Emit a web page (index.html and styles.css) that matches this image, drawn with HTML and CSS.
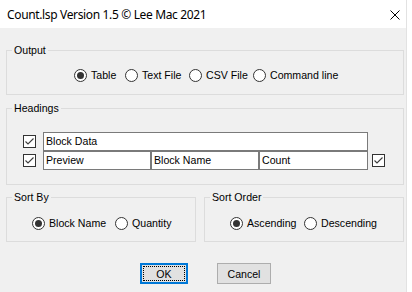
FILE: index.html
```html
<!DOCTYPE html>
<html lang="en">
<head>
    <meta charset="UTF-8">
    <meta name="viewport" content="width=device-width, initial-scale=1.0">
    <title>Count.lsp</title>
    <link rel="stylesheet" href="styles.css">
</head>
<body>
    <div class="window">
        <!-- Title bar -->
        <div class="titlebar">
            <span class="title">Count.lsp Version 1.5 © Lee Mac 2021</span>
            <svg class="close" width="10" height="10" viewBox="0 0 10 10">
                <path d="M0.5 0.5 L9.5 9.5 M9.5 0.5 L0.5 9.5" stroke="#000" stroke-width="1" fill="none"/>
            </svg>
        </div>

        <div class="client">
            <!-- Output -->
            <fieldset class="group group-output">
                <legend>Output</legend>
                <div class="radios radios-output">
                    <label class="opt opt-table"><span class="radio checked"></span>Table</label>
                    <label class="opt opt-text"><span class="radio"></span>Text File</label>
                    <label class="opt opt-csv"><span class="radio"></span>CSV File</label>
                    <label class="opt"><span class="radio"></span>Command line</label>
                </div>
            </fieldset>

            <!-- Headings -->
            <fieldset class="group group-headings">
                <legend>Headings</legend>
                <div class="heading-row">
                    <span class="check checked"><svg width="11" height="11" viewBox="0 0 11 11"><polyline points="1.5,5.5 4,8 9.5,2.5" fill="none" stroke="#3c3c3c" stroke-width="1.1"/></svg></span>
                    <div class="textbox textbox-wide">Block Data</div>
                </div>
                <div class="heading-row">
                    <span class="check checked"><svg width="11" height="11" viewBox="0 0 11 11"><polyline points="1.5,5.5 4,8 9.5,2.5" fill="none" stroke="#3c3c3c" stroke-width="1.1"/></svg></span>
                    <div class="textbox textbox-col">Preview</div>
                    <div class="textbox textbox-col">Block Name</div>
                    <div class="textbox textbox-last">Count</div>
                    <span class="check check-right checked"><svg width="11" height="11" viewBox="0 0 11 11"><polyline points="1.5,5.5 4,8 9.5,2.5" fill="none" stroke="#3c3c3c" stroke-width="1.1"/></svg></span>
                </div>
            </fieldset>

            <!-- Sort -->
            <div class="sort-row">
                <fieldset class="group group-sortby">
                    <legend>Sort By</legend>
                    <div class="radios">
                        <label class="opt opt-name"><span class="radio checked"></span>Block Name</label>
                        <label class="opt"><span class="radio"></span>Quantity</label>
                    </div>
                </fieldset>
                <fieldset class="group group-order">
                    <legend>Sort Order</legend>
                    <div class="radios">
                        <label class="opt opt-asc"><span class="radio checked"></span>Ascending</label>
                        <label class="opt"><span class="radio"></span>Descending</label>
                    </div>
                </fieldset>
            </div>

            <!-- Buttons -->
            <div class="buttons">
                <button class="btn btn-ok"><span class="focus">OK</span></button>
                <button class="btn btn-cancel">Cancel</button>
            </div>
        </div>
    </div>
</body>
</html>
```

FILE: styles.css
```css
body {
    margin: 0;
    background-color: #fff;
    font-family: "Liberation Sans", Arial, sans-serif;
    font-size: 10.6px;
    color: #000;
}
.window {
    width: 406px;
    height: 292px;
    border-right: 1px solid #e2e2e2;
    display: flex;
    flex-direction: column;
}
.titlebar {
    height: 28px;
    background-color: #fff;
    display: flex;
    align-items: center;
    justify-content: space-between;
}
.title {
    font-family: "Noto Sans", sans-serif;
    font-size: 12px;
    letter-spacing: -0.35px;
    padding-left: 7px;
    padding-top: 1px;
}
.close {
    margin-right: 6px;
    margin-top: 1px;
}
.client {
    flex: 1;
    background-color: #f0f0f0;
    padding: 16px 2px 0 6px;
}
.group {
    margin: 0;
    padding: 0;
    border: 1px solid #dcdcdc;
    min-width: 0;
}
.group legend {
    padding: 0 2px;
    margin-left: 5px;
    line-height: 13px;
}
.radios {
    display: flex;
    align-items: center;
    height: 14px;
}
.opt {
    display: flex;
    align-items: center;
    white-space: nowrap;
}
.radio {
    width: 11px;
    height: 11px;
    border: 1px solid #333;
    border-radius: 50%;
    background-color: #fff;
    margin-right: 4px;
    display: flex;
    align-items: center;
    justify-content: center;
    flex-shrink: 0;
}
.radio.checked::after {
    content: "";
    width: 7px;
    height: 7px;
    border-radius: 50%;
    background-color: #333;
}

/* Output */
.radios-output {
    margin: 11px 0 12px 67px;
}
.opt-table { width: 51px; }
.opt-text { width: 64px; }
.opt-csv { width: 64px; }

/* Headings */
.group-headings {
    margin-top: 7px;
    padding: 17px 0 14px 0;
}
.heading-row {
    display: flex;
    align-items: center;
    height: 19px;
    margin-left: 16px;
}
.check {
    width: 11px;
    height: 11px;
    border: 1px solid #333;
    background-color: #fff;
    margin-right: 7px;
    display: flex;
    flex-shrink: 0;
}
.check-right {
    margin-right: 0;
    margin-left: 4px;
}
.textbox {
    box-sizing: border-box;
    height: 19px;
    border: 1px solid #7a7a7a;
    background-color: #fff;
    padding-left: 2px;
    line-height: 17px;
    white-space: nowrap;
}
.textbox-wide { width: 325px; }
.textbox-col { width: 108px; }
.textbox-last { width: 109px; }

/* Sort */
.sort-row {
    display: flex;
    gap: 8px;
    margin-top: 6px;
}
.group-sortby { width: 190px; box-sizing: border-box; }
.group-order { width: 200px; box-sizing: border-box; }
.sort-row .radios {
    margin: 12px 0 11px 25px;
}
.opt-name { width: 83px; }
.opt-asc { width: 74px; }

/* Buttons */
.buttons {
    display: flex;
    gap: 29px;
    margin-top: 21px;
    padding-left: 134px;
}
.btn {
    box-sizing: border-box;
    height: 21px;
    padding: 0;
    background-color: #e1e1e1;
    font-family: "Liberation Sans", Arial, sans-serif;
    font-size: 10.6px;
    color: #000;
}
.btn-ok {
    width: 48px;
    border: 2px solid #0078d7;
    display: flex;
    padding: 1px;
}
.focus {
    flex: 1;
    border: 1px dotted #000;
    display: flex;
    align-items: center;
    justify-content: center;
}
.btn-cancel {
    width: 54px;
    border: 1px solid #adadad;
}
```
